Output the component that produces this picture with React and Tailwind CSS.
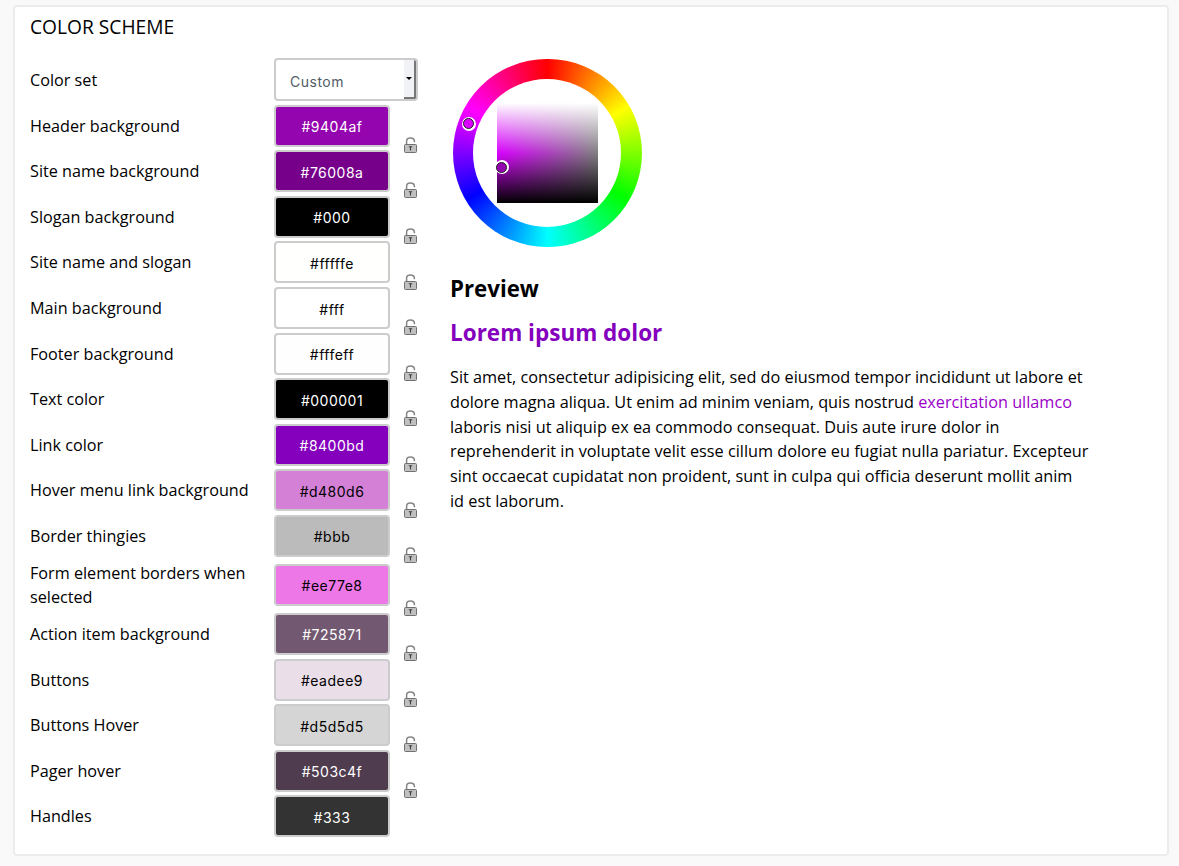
const colorRows = [
  { label: "Header background", value: "#9404af", bg: "bg-[#9404af]", text: "text-white" },
  { label: "Site name background", value: "#76008a", bg: "bg-[#76008a]", text: "text-white" },
  { label: "Slogan background", value: "#000", bg: "bg-[#000000]", text: "text-white" },
  { label: "Site name and slogan", value: "#fffffe", bg: "bg-[#fffffe]", text: "text-black" },
  { label: "Main background", value: "#fff", bg: "bg-white", text: "text-black" },
  { label: "Footer background", value: "#fffeff", bg: "bg-[#fffeff]", text: "text-black" },
  { label: "Text color", value: "#000001", bg: "bg-[#000001]", text: "text-white" },
  { label: "Link color", value: "#8400bd", bg: "bg-[#8400bd]", text: "text-white" },
  { label: "Hover menu link background", value: "#d480d6", bg: "bg-[#d480d6]", text: "text-black" },
  { label: "Border thingies", value: "#bbb", bg: "bg-[#bbbbbb]", text: "text-black" },
  { label: "Form element borders when selected", value: "#ee77e8", bg: "bg-[#ee77e8]", text: "text-black", tall: true },
  { label: "Action item background", value: "#725871", bg: "bg-[#725871]", text: "text-white" },
  { label: "Buttons", value: "#eadee9", bg: "bg-[#eadee9]", text: "text-black" },
  { label: "Buttons Hover", value: "#d5d5d5", bg: "bg-[#d5d5d5]", text: "text-black" },
  { label: "Pager hover", value: "#503c4f", bg: "bg-[#503c4f]", text: "text-white" },
  { label: "Handles", value: "#333", bg: "bg-[#333333]", text: "text-white", noLock: true },
];

const LockIcon = () => (
  <svg width="14" height="16" viewBox="0 0 14 16" className="block">
    <path d="M2.6 8V4.2C2.6 1.8 4.2 0.9 6.4 0.9C8.6 0.9 10.4 1.8 10.4 4.2V5.2" fill="none" stroke="#858585" strokeWidth="1.5" />
    <rect x="0.5" y="7.5" width="12" height="8" rx="1" fill="#c0c0c0" stroke="#707070" />
    <path d="M4.8 9.8H8.2M6.5 9.8V13.6" fill="none" stroke="#3c3c3c" strokeWidth="1.1" />
  </svg>
);

const ColorWheel = () => (
  <div className="relative flex h-[188.4px] w-[188.4px] items-center justify-center rounded-full bg-[conic-gradient(#ff0000,#ffff00,#00ff00,#00ffff,#0000ff,#ff00ff,#ff0000)]">
    <div className="flex h-[148px] w-[148px] items-center justify-center rounded-full bg-white">
      <div className="h-[100px] w-[101px] bg-[linear-gradient(to_bottom,#ffffff,transparent_50%,#000000),linear-gradient(to_right,#d900ff,#808080)]" />
    </div>
    <div className="absolute left-[8.7px] top-[57.7px] h-[14px] w-[14px] rounded-full bg-white p-[1.5px]">
      <div className="h-full w-full rounded-full border-[1.5px] border-[#222] bg-[#d900ff]" />
    </div>
    <div className="absolute left-[41.7px] top-[101.3px] h-[14px] w-[14px] rounded-full bg-white p-[1.5px]">
      <div className="h-full w-full rounded-full border-[1.5px] border-[#222] bg-[#9404af]" />
    </div>
  </div>
);

export default function App() {
  return (
    <div className="min-h-[866px] bg-[#f9f9f9] pb-[10px] pl-[13px] pr-[10px] pt-[5px] font-['Open_Sans',sans-serif] text-[16.2px] text-black">
      <div className="h-[851px] rounded-[4px] border-2 border-[#ececec] bg-white pl-[15px]">
        <h2 className="pt-[7px] text-[19.2px] uppercase leading-[26px]">Color scheme</h2>
        <div className="mt-[18px] flex gap-[32px]">
          {/* Form */}
          <div className="w-[388px]">
            <div className="flex h-[44.85px] items-start">
              <label className="w-[244px] pt-[10px] leading-[24px]">Color set</label>
              <div className="flex h-[43px] w-[144px] overflow-hidden rounded-[4px] border-2 border-[#cccccc] bg-white font-['Inter',sans-serif] text-[14px] text-[#4f5b66]">
                <span className="flex-1 pl-[14px] pt-[11px] tracking-[0.5px]">Custom</span>
                <span className="flex w-[12px] items-center justify-center border-b-2 border-r-2 border-[#777] bg-[#f1f2f6]">
                  <span className="h-0 w-0 border-x-[3px] border-t-[3px] border-x-transparent border-t-black" />
                </span>
              </div>
            </div>
            {colorRows.map((row) => (
              <div key={row.label} className={`flex items-center ${row.tall ? "h-[52.4px]" : "h-[45.6px]"}`}>
                <label className="w-[244px] pr-[2px] leading-[24px]">{row.label}</label>
                <div
                  className={`flex h-[42px] w-[116px] items-center justify-center rounded-[4px] border-2 border-[#cccccc] pt-[2px] font-['Inter',sans-serif] text-[14px] tracking-[0.5px] ${row.bg} ${row.text}`}
                >
                  {row.value}
                </div>
                {!row.noLock && (
                  <div className="ml-[14px] -mb-[4.4px] self-end">
                    <LockIcon />
                  </div>
                )}
              </div>
            ))}
          </div>

          {/* Picker and preview */}
          <div className="w-[640px]">
            <div className="ml-[3.3px] mt-[1px]">
              <ColorWheel />
            </div>
            <h2 className="mt-[26px] text-[22.25px] font-bold leading-[32px]">Preview</h2>
            <h2 className="mt-[12px] text-[22.5px] font-bold leading-[32px] text-[#8400bd]">Lorem ipsum dolor</h2>
            <p className="mt-[15.6px] text-[16.25px] leading-[24.8px]">
              Sit amet, consectetur adipisicing elit, sed do eiusmod tempor incididunt ut labore et dolore magna aliqua.
              Ut enim ad minim veniam, quis nostrud <a className="text-[#9a00c8]">exercitation ullamco</a> laboris nisi
              ut aliquip ex ea commodo consequat. Duis aute irure dolor in reprehenderit in voluptate velit esse cillum
              dolore eu fugiat nulla pariatur. Excepteur sint occaecat cupidatat non proident, sunt in culpa qui officia
              deserunt mollit anim id est laborum.
            </p>
          </div>
        </div>
      </div>
    </div>
  );
}
